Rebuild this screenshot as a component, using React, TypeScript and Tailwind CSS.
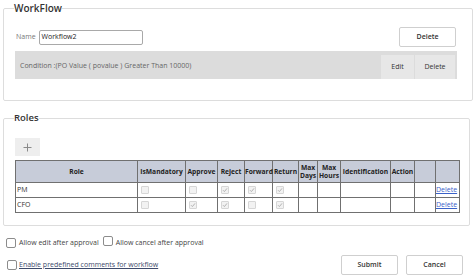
import React from 'react'

type Role = {
  name: string
  mandatory: boolean
  approve: boolean
  reject: boolean
  forward: boolean
  ret: boolean
}

const roles: Role[] = [
  { name: 'PM', mandatory: false, approve: false, reject: true, forward: true, ret: true },
  { name: 'CFO', mandatory: false, approve: true, reject: true, forward: false, ret: true }
]

function TinyCheck({ checked }: { checked: boolean }) {
  return (
    <span className="relative inline-block h-[8px] w-[8px] rounded-[1px] border border-[#d6d6d6] bg-[#f2f2f2] align-middle">
      {checked && (
        <svg className="absolute left-[0px] top-[0px]" width="6" height="6" viewBox="0 0 6 6">
          <path d="M1 3.2 L2.4 4.6 L5 1.4" fill="none" stroke="#b4b4b4" strokeWidth="1" />
        </svg>
      )}
    </span>
  )
}

function Box() {
  return <span className="inline-block h-[10px] w-[10px] shrink-0 rounded-[2px] border border-[#8c8c8c] bg-white" />
}

function GrayButton({ children, className }: { children: React.ReactNode; className: string }) {
  return (
    <button className={`flex h-[24px] items-center justify-center bg-[#e7e7e7] text-[7px] text-[#333] ${className}`}>
      {children}
    </button>
  )
}

function WhiteButton({ children, className }: { children: React.ReactNode; className: string }) {
  return (
    <button
      className={`flex h-[20px] items-center justify-center rounded-[2px] border border-[#cfcfcf] bg-white text-[7px] font-semibold text-[#333] ${className}`}
    >
      {children}
    </button>
  )
}

const th = 'border border-[#707070] px-0 text-center align-middle font-bold leading-[8px] text-[#222]'
const td = 'h-[15px] border border-[#707070] p-0 align-middle'

export default function App() {
  return (
    <div className="h-[279px] w-[474px] overflow-hidden bg-white pt-[1px] font-['Open_Sans',sans-serif] text-[7px] text-[#444]">
      <fieldset className="ml-[3px] w-[470px] rounded-[2px] border border-[#dddddd] pb-[21px] pl-[11px] pr-[15px]">
        <legend className="ml-[-1px] px-0 text-[10px] font-semibold leading-[14px] text-[#333]">WorkFlow</legend>
        <div className="mt-[12px] flex h-[20px] items-center justify-between">
          <div className="flex items-center pl-[1px]">
            <span className="mr-[3px] text-[#777]">Name</span>
            <div className="flex h-[15px] w-[104px] items-center rounded-[2px] border border-[#a9a9a9] pl-[2px] text-[#222]">
              Workflow2
            </div>
          </div>
          <WhiteButton className="mr-[1px] w-[57px]">Delete</WhiteButton>
        </div>
        <div className="mt-[4px] flex h-[28px] items-end justify-between bg-[#dcdcdc] pl-[5px] pr-[2px]">
          <span className="mb-[8px] text-[#666]">Condition :(PO Value ( povalue ) Greater Than 10000)</span>
          <div className="flex gap-[1px]">
            <GrayButton className="w-[33px]">Edit</GrayButton>
            <GrayButton className="w-[40px]">Delete</GrayButton>
          </div>
        </div>
      </fieldset>

      <fieldset className="ml-[3px] mt-[10px] w-[467px] rounded-[2px] border border-[#dddddd] pb-[12px] pl-[11px] pr-[9px]">
        <legend className="ml-[-1px] px-0 text-[9.5px] font-semibold leading-[14px] text-[#333]">Roles</legend>
        <div className="mt-[13px] flex h-[18px] w-[25px] items-center justify-center bg-[#eeeeee]">
          <svg width="9" height="9" viewBox="0 0 9 9">
            <path d="M4.5 0.5 V8.5 M0.5 4.5 H8.5" stroke="#8a8a8a" strokeWidth="1" />
          </svg>
        </div>
        <table className="mt-[4px] w-[444px] table-fixed border-collapse">
          <colgroup>
            <col className="w-[122px]" />
            <col className="w-[48px]" />
            <col className="w-[32px]" />
            <col className="w-[27px]" />
            <col className="w-[28px]" />
            <col className="w-[26px]" />
            <col className="w-[19px]" />
            <col className="w-[23px]" />
            <col className="w-[50px]" />
            <col className="w-[24px]" />
            <col className="w-[21px]" />
            <col className="w-[24px]" />
          </colgroup>
          <thead>
            <tr className="h-[22px] bg-[#c7ccd9] text-[6.7px]">
              <th className={th}>Role</th>
              <th className={`${th} whitespace-nowrap`}>IsMandatory</th>
              <th className={`${th} whitespace-nowrap`}>Approve</th>
              <th className={`${th} whitespace-nowrap`}>Reject</th>
              <th className={`${th} whitespace-nowrap`}>Forward</th>
              <th className={`${th} whitespace-nowrap`}>Return</th>
              <th className={th}>
                Max
                <br />
                Days
              </th>
              <th className={th}>
                Max
                <br />
                Hours
              </th>
              <th className={`${th} whitespace-nowrap`}>Identification</th>
              <th className={`${th} whitespace-nowrap`}>Action</th>
              <th className={th}></th>
              <th className={th}></th>
            </tr>
          </thead>
          <tbody>
            {roles.map(r => (
              <tr key={r.name}>
                <td className={`${td} pl-[1px] text-[#333]`}>{r.name}</td>
                <td className={`${td} pl-[3px]`}>
                  <TinyCheck checked={r.mandatory} />
                </td>
                <td className={`${td} pl-[3px]`}>
                  <TinyCheck checked={r.approve} />
                </td>
                <td className={`${td} pl-[3px]`}>
                  <TinyCheck checked={r.reject} />
                </td>
                <td className={`${td} pl-[3px]`}>
                  <TinyCheck checked={r.forward} />
                </td>
                <td className={`${td} pl-[3px]`}>
                  <TinyCheck checked={r.ret} />
                </td>
                <td className={td}></td>
                <td className={td}></td>
                <td className={td}></td>
                <td className={td}></td>
                <td className={td}></td>
                <td className={`${td} overflow-hidden whitespace-nowrap`}>
                  <a className="text-[#3a62c9] underline" href="#">
                    Delete
                  </a>
                </td>
              </tr>
            ))}
          </tbody>
        </table>
      </fieldset>

      <div className="mt-[11px] flex h-[12px] items-center pl-[6px] text-[#444]">
        <Box />
        <span className="ml-[3px]">Allow edit after approval</span>
        <span className="ml-[4px]">
          <Box />
        </span>
        <span className="ml-[3px]">Allow cancel after approval</span>
      </div>
      <div className="mt-[6px] flex h-[20px] items-center justify-between pl-[7px] pr-[11px]">
        <div className="flex items-center">
          <Box />
          <span className="ml-[2px] text-[#3d4a6b] underline">Enable predefined comments for workflow</span>
        </div>
        <div className="flex gap-[8px]">
          <WhiteButton className="w-[57px]">Submit</WhiteButton>
          <WhiteButton className="w-[57px]">Cancel</WhiteButton>
        </div>
      </div>
    </div>
  )
}
